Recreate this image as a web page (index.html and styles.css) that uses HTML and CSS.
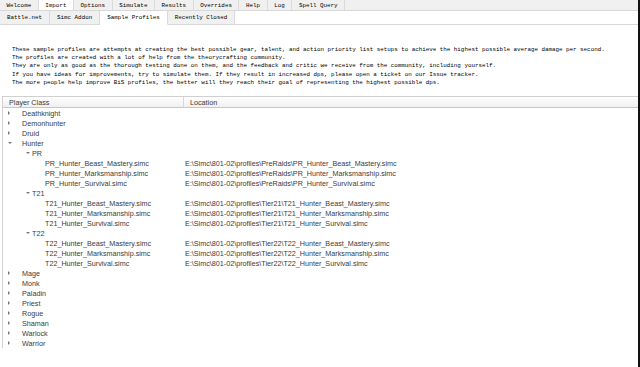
FILE: index.html
```html
<!DOCTYPE html>
<html lang="en">
<head>
    <meta charset="UTF-8">
    <meta name="viewport" content="width=device-width, initial-scale=1.0">
    <title>SimulationCraft - Sample Profiles</title>
    <link rel="stylesheet" href="styles.css">
</head>
<body>
    <div class="window">
        <div class="tabs main-tabs">
            <span class="tab">Welcome</span>
            <span class="tab active">Import</span>
            <span class="tab">Options</span>
            <span class="tab">Simulate</span>
            <span class="tab">Results</span>
            <span class="tab">Overrides</span>
            <span class="tab">Help</span>
            <span class="tab">Log</span>
            <span class="tab">Spell Query</span>
        </div>
        <div class="tabs sub-tabs">
            <span class="tab">Battle.net</span>
            <span class="tab">Simc Addon</span>
            <span class="tab active">Sample Profiles</span>
            <span class="tab">Recently Closed</span>
        </div>
        <div class="intro">
            <p>These sample profiles are attempts at creating the best possible gear, talent, and action priority list setups to achieve the highest possible average damage per second.</p>
            <p>The profiles are created with a lot of help from the theorycrafting community.</p>
            <p>They are only as good as the thorough testing done on them, and the feedback and critic we receive from the community, including yourself.</p>
            <p>If you have ideas for improvements, try to simulate them. If they result in increased dps, please open a ticket on our Issue tracker.</p>
            <p>The more people help improve BiS profiles, the better will they reach their goal of representing the highest possible dps.</p>
        </div>
        <div class="tree">
            <div class="tree-head">
                <span class="col-name">Player Class</span>
                <span class="col-loc">Location</span>
            </div>
            <div class="row"><span class="name lvl0"><i class="arrow closed"></i>Deathknight</span><span class="loc"></span></div>
            <div class="row"><span class="name lvl0"><i class="arrow closed"></i>Demonhunter</span><span class="loc"></span></div>
            <div class="row"><span class="name lvl0"><i class="arrow closed"></i>Druid</span><span class="loc"></span></div>
            <div class="row"><span class="name lvl0"><i class="arrow open"></i>Hunter</span><span class="loc"></span></div>
            <div class="row"><span class="name lvl1"><i class="arrow open"></i>PR</span><span class="loc"></span></div>
            <div class="row"><span class="name lvl2">PR_Hunter_Beast_Mastery.simc</span><span class="loc">E:\Simc\801-02\profiles\PreRaids\PR_Hunter_Beast_Mastery.simc</span></div>
            <div class="row"><span class="name lvl2">PR_Hunter_Marksmanship.simc</span><span class="loc">E:\Simc\801-02\profiles\PreRaids\PR_Hunter_Marksmanship.simc</span></div>
            <div class="row"><span class="name lvl2">PR_Hunter_Survival.simc</span><span class="loc">E:\Simc\801-02\profiles\PreRaids\PR_Hunter_Survival.simc</span></div>
            <div class="row"><span class="name lvl1"><i class="arrow open"></i>T21</span><span class="loc"></span></div>
            <div class="row"><span class="name lvl2">T21_Hunter_Beast_Mastery.simc</span><span class="loc">E:\Simc\801-02\profiles\Tier21\T21_Hunter_Beast_Mastery.simc</span></div>
            <div class="row"><span class="name lvl2">T21_Hunter_Marksmanship.simc</span><span class="loc">E:\Simc\801-02\profiles\Tier21\T21_Hunter_Marksmanship.simc</span></div>
            <div class="row"><span class="name lvl2">T21_Hunter_Survival.simc</span><span class="loc">E:\Simc\801-02\profiles\Tier21\T21_Hunter_Survival.simc</span></div>
            <div class="row"><span class="name lvl1"><i class="arrow open"></i>T22</span><span class="loc"></span></div>
            <div class="row"><span class="name lvl2">T22_Hunter_Beast_Mastery.simc</span><span class="loc">E:\Simc\801-02\profiles\Tier22\T22_Hunter_Beast_Mastery.simc</span></div>
            <div class="row"><span class="name lvl2">T22_Hunter_Marksmanship.simc</span><span class="loc">E:\Simc\801-02\profiles\Tier22\T22_Hunter_Marksmanship.simc</span></div>
            <div class="row"><span class="name lvl2">T22_Hunter_Survival.simc</span><span class="loc">E:\Simc\801-02\profiles\Tier22\T22_Hunter_Survival.simc</span></div>
            <div class="row"><span class="name lvl0"><i class="arrow closed"></i>Mage</span><span class="loc"></span></div>
            <div class="row"><span class="name lvl0"><i class="arrow closed"></i>Monk</span><span class="loc"></span></div>
            <div class="row"><span class="name lvl0"><i class="arrow closed"></i>Paladin</span><span class="loc"></span></div>
            <div class="row"><span class="name lvl0"><i class="arrow closed"></i>Priest</span><span class="loc"></span></div>
            <div class="row"><span class="name lvl0"><i class="arrow closed"></i>Rogue</span><span class="loc"></span></div>
            <div class="row"><span class="name lvl0"><i class="arrow closed"></i>Shaman</span><span class="loc"></span></div>
            <div class="row"><span class="name lvl0"><i class="arrow closed"></i>Warlock</span><span class="loc"></span></div>
            <div class="row"><span class="name lvl0"><i class="arrow closed"></i>Warrior</span><span class="loc"></span></div>
        </div>
    </div>
</body>
</html>
```

FILE: styles.css
```css
body {
    margin: 0;
    padding: 0;
    background: white;
    overflow: hidden;
}
.window {
    width: 638px;
    height: 367px;
    border-right: 2px solid #111;
    background: white;
    overflow: hidden;
}
.tabs {
    display: flex;
    font-family: "Liberation Mono", monospace;
    font-size: 5.85px;
    color: #000;
}
.main-tabs {
    height: 10px;
    background: #f0f0f0;
    border-bottom: 1px solid #d8d8d8;
}
.sub-tabs {
    height: 13px;
    background: white;
    border-bottom: 1px solid #d8d8d8;
}
.tab {
    display: flex;
    align-items: center;
    padding: 0 6.6px;
    border-right: 1px solid #dadada;
    background: #f0f0f0;
}
.sub-tabs .tab {
    padding: 0 7px;
    border-bottom: 1px solid #d8d8d8;
    margin-bottom: -1px;
}
.tab.active {
    background: white;
}
.sub-tabs .tab.active {
    border-bottom-color: white;
}
.intro {
    padding: 21px 0 0 12px;
    height: 50px;
    font-family: "Liberation Mono", monospace;
    font-size: 5.85px;
    color: #000;
}
.intro p {
    margin: 0;
    line-height: 8.2px;
    white-space: nowrap;
}
.tree {
    margin-left: 2px;
    border-left: 1px solid #d0d0d0;
    border-top: 1px solid #d0d0d0;
    font-family: "Liberation Sans", Arial, sans-serif;
    font-size: 7.2px;
    color: #3a3a3a;
}
.tree-head {
    display: grid;
    grid-template-columns: 180px 1fr;
    height: 10px;
    background: linear-gradient(#ffffff, #f0f0f0);
    border-bottom: 1px solid #c8c8c8;
}
.tree-head span {
    display: flex;
    align-items: center;
    padding-left: 6px;
}
.col-loc {
    border-left: 1px solid #d8d8d8;
}
.row {
    display: grid;
    grid-template-columns: 181px 1fr;
    height: 10px;
    align-items: center;
    white-space: nowrap;
}
.name {
    display: flex;
    align-items: center;
}
.lvl0 {
    padding-left: 19px;
}
.lvl1 {
    padding-left: 29px;
}
.lvl2 {
    padding-left: 42px;
}
.loc {
    padding-left: 1px;
}
.arrow {
    position: relative;
    width: 0;
    height: 0;
}
.arrow::before {
    content: "";
    position: absolute;
    width: 0;
    height: 0;
}
.lvl0 .arrow::before {
    left: -14px;
}
.lvl1 .arrow::before {
    left: -6px;
}
.arrow.closed::before {
    top: -2px;
    border-top: 2px solid transparent;
    border-bottom: 2px solid transparent;
    border-left: 2px solid #777;
}
.arrow.open::before {
    top: -1px;
    border-left: 2px solid transparent;
    border-right: 2px solid transparent;
    border-top: 2px solid #777;
}
```
